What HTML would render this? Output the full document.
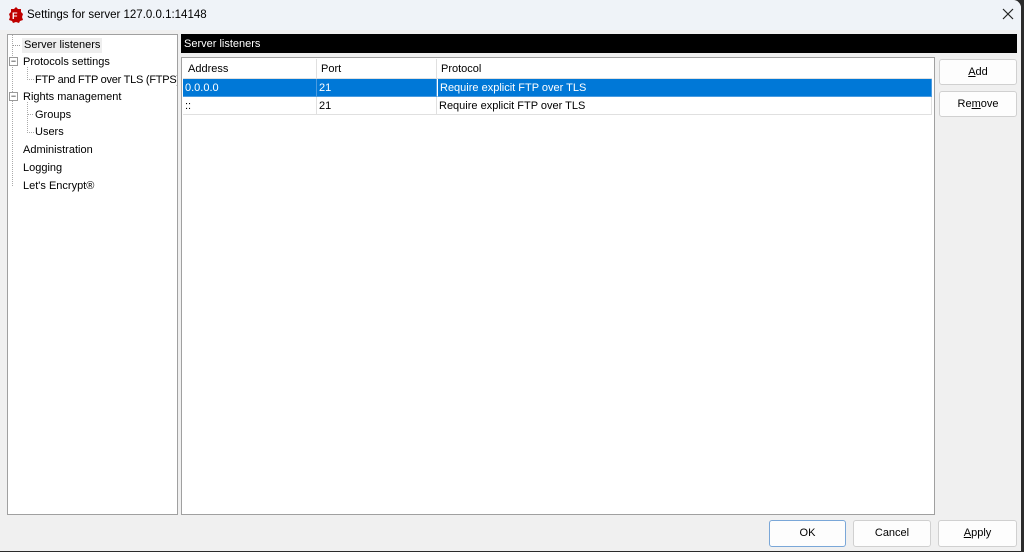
<!DOCTYPE html><html><head><style>
body{margin:0;width:1024px;height:552px;background:#2b2b2b;font-family:"Liberation Sans",sans-serif;font-size:11px;color:#000;overflow:hidden;position:relative}
.win{position:absolute;left:0;top:0;width:1021px;height:551px;background:#f0f0f0;border-radius:0 8px 0 0;overflow:hidden}
.title{position:absolute;left:0;top:0;width:1021px;height:30px;background:#eff3f8}
.abs{position:absolute}
.tree{left:7px;top:34px;width:169px;height:479px;background:#fff;border:1px solid #a0a0a0;overflow:hidden}
.tree div{position:absolute;white-space:nowrap}
.btn{position:absolute;background:#fdfdfd;border:1px solid #d0d0d0;border-radius:3px;text-align:center;line-height:25px;font-size:11px}
.list{left:181px;top:57px;width:752px;height:456px;background:#fff;border:1px solid #a0a0a0}
.cell{position:absolute;line-height:18px;padding-left:2px;box-sizing:border-box;border-right:1px solid #e0e0e0;border-bottom:1px solid #e0e0e0}
</style></head><body><div class="win">
<div class="title"></div>
<svg class="abs" style="left:8px;top:7px" width="16" height="16" viewBox="0 0 16 16"><path d="M8 0l2 2 3 0 0 3 2 2-1 3 1 3-3 1-1 2-3-1-3 1-1-2-3-1 1-3-1-3 2-2 0-3 3 0z" fill="#bf0000"/><text x="4" y="12" font-size="9" font-weight="bold" fill="#fff" font-family="Liberation Sans">F</text></svg>
<div class="abs" style="left:27px;top:9px;font-size:11.5px">Settings for server 127.0.0.1:14148</div>
<svg class="abs" style="left:1002px;top:8px" width="12" height="12" viewBox="0 0 12 12"><path d="M1 1L11 11M11 1L1 11" stroke="#222" stroke-width="1.2"/></svg>
<div class="abs tree">
<div style="left:14px;top:3px;background:#eee;padding:0 2px;line-height:15px">Server listeners</div>
<div style="left:4px;top:10px;width:8px;border-top:1px dotted #999"></div>
<div style="left:4px;top:0px;height:151px;border-left:1px dotted #aaa"></div>
<div style="left:1px;top:22px;width:7px;height:7px;border:1px solid #999;background:#fff;font-size:9px;line-height:6px;text-align:center">−</div>
<div style="left:15px;top:21px">Protocols settings</div>
<div style="left:19px;top:32px;height:12px;border-left:1px dotted #aaa;width:6px;border-bottom:1px dotted #aaa"></div>
<div style="left:27px;top:39px;letter-spacing:-0.25px">FTP and FTP over TLS (FTPS)</div>
<div style="left:1px;top:57px;width:7px;height:7px;border:1px solid #999;background:#fff;font-size:9px;line-height:6px;text-align:center">−</div>
<div style="left:15px;top:56px">Rights management</div>
<div style="left:19px;top:67px;height:30px;border-left:1px dotted #aaa;width:6px;border-bottom:1px dotted #aaa"></div>
<div style="left:19px;top:79px;width:6px;border-top:1px dotted #aaa"></div>
<div style="left:27px;top:74px">Groups</div>
<div style="left:27px;top:91px">Users</div>
<div style="left:15px;top:109px">Administration</div>
<div style="left:15px;top:127px">Logging</div>
<div style="left:15px;top:145px">Let's Encrypt®</div>
</div>
<div class="abs" style="left:181px;top:34px;width:836px;height:19px;background:#000;color:#fff;line-height:20px;padding-left:3px;box-sizing:border-box">Server listeners</div>
<div class="abs list">
<div class="cell" style="left:1px;top:1px;width:134px;height:20px;line-height:21px;padding-left:5px">Address</div>
<div class="cell" style="left:135px;top:1px;width:120px;height:20px;line-height:21px;padding-left:4px">Port</div>
<div class="cell" style="left:255px;top:1px;width:495px;height:20px;line-height:21px;border-right:none;padding-left:4px">Protocol</div>
<div class="abs" style="left:1px;top:21px;width:749px;height:17px;background:#0078d7"></div>
<div class="cell" style="left:1px;top:21px;width:134px;height:18px;color:#fff;border-color:#4a9be0">0.0.0.0</div>
<div class="cell" style="left:135px;top:21px;width:120px;height:18px;color:#fff;border-color:#4a9be0">21</div>
<div class="cell" style="left:255px;top:21px;width:495px;height:18px;color:#fff;border-color:#4a9be0;border-left:1px solid #fff">Require explicit FTP over TLS</div>
<div class="cell" style="left:1px;top:39px;width:134px;height:18px">::</div>
<div class="cell" style="left:135px;top:39px;width:120px;height:18px">21</div>
<div class="cell" style="left:255px;top:39px;width:495px;height:18px">Require explicit FTP over TLS</div>
</div>
<div class="btn" style="left:939px;top:59px;width:76px;height:24px"><u>A</u>dd</div>
<div class="btn" style="left:939px;top:91px;width:76px;height:24px">Re<u>m</u>ove</div>
<div class="btn" style="left:769px;top:520px;width:75px;height:25px;border-color:#7aa7d8">OK</div>
<div class="btn" style="left:853px;top:520px;width:76px;height:25px">Cancel</div>
<div class="btn" style="left:938px;top:520px;width:77px;height:25px"><u>A</u>pply</div>
</div></body></html>
